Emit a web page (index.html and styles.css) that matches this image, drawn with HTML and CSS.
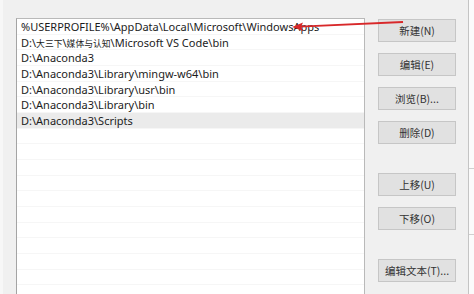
FILE: index.html
```html
<!DOCTYPE html>
<html lang="zh-CN">

<head>
    <meta charset="UTF-8">
    <meta name="viewport" content="width=device-width, initial-scale=1.0">
    <title>编辑环境变量</title>
    <link rel="stylesheet" href="styles.css">
</head>

<body>
    <div class="dialog">
        <div class="gutter"></div>

        <!-- Path list -->
        <ul class="path-list">
            <li>%USERPROFILE%\AppData\Local\Microsoft\WindowsApps</li>
            <li>D:\<span class="cjk">大三下</span>\<span class="cjk">媒体与认知</span>\Microsoft VS Code\bin</li>
            <li>D:\Anaconda3</li>
            <li>D:\Anaconda3\Library\mingw-w64\bin</li>
            <li>D:\Anaconda3\Library\usr\bin</li>
            <li>D:\Anaconda3\Library\bin</li>
            <li class="selected">D:\Anaconda3\Scripts</li>
            <li></li>
            <li></li>
            <li></li>
            <li></li>
            <li></li>
            <li></li>
            <li></li>
            <li></li>
            <li></li>
            <li></li>
            <li></li>
        </ul>

        <!-- Buttons -->
        <div class="buttons">
            <button>新建(N)</button>
            <button>编辑(E)</button>
            <button>浏览(B)...</button>
            <button>删除(D)</button>
            <button class="spaced">上移(U)</button>
            <button>下移(O)</button>
            <button class="spaced">编辑文本(T)...</button>
        </div>

        <div class="behind">
            <div class="behind-line first"></div>
            <div class="behind-line second"></div>
        </div>
    </div>

    <!-- Red arrow drawn over the screenshot -->
    <svg class="arrow" width="474" height="294" viewBox="0 0 474 294">
        <line x1="403" y1="22" x2="300" y2="26.6" stroke="#d8282a" stroke-width="1.8" />
        <path d="M292 27 L303 22.5 L301 27 L303.5 31 Z" fill="#d8282a" />
    </svg>
</body>

</html>
```

FILE: styles.css
```css
body {
    margin: 0;
    padding: 0;
    width: 474px;
    height: 294px;
    overflow: hidden;
    background-color: #f0f0f0;
    font-family: "Noto Sans", "Noto Sans CJK SC", sans-serif;
    color: #1c1c1c;
    position: relative;
}

.dialog {
    display: flex;
    height: 294px;
}

.gutter {
    width: 3px;
    margin-right: 13px;
    background-color: #f7f7f7;
}

.path-list {
    list-style: none;
    margin: 18px 0 0 0;
    padding: 0;
    width: 347px;
    background-color: #ffffff;
    border: 1px solid #b9b9b9;
    border-left-color: #a4a4a4;
    border-bottom: none;
    overflow: hidden;
}

.path-list li {
    height: 15.67px;
    line-height: 15.67px;
    padding-left: 4px;
    font-size: 11px;
    white-space: nowrap;
    box-shadow: inset 0 -1px 0 #f6f6f6;
}

.path-list li.selected {
    background-color: #ebebeb;
}

.path-list .cjk {
    font-family: "Noto Sans CJK SC", sans-serif;
    font-size: 8.8px;
}

.buttons {
    display: flex;
    flex-direction: column;
    gap: 11px;
    margin: 19px 0 0 13px;
    width: 78px;
}

.buttons button {
    height: 23px;
    padding: 0;
    font-family: "Noto Sans CJK SC", sans-serif;
    font-size: 10.5px;
    color: #333333;
    background-color: #e1e1e1;
    border: 1px solid #c6c6c6;
    border-radius: 0;
}

.buttons button.spaced {
    margin-top: 18px;
}

.behind {
    margin-left: 12px;
    flex: 1;
    border-left: 1px solid #c4c4c4;
    background-color: #fbfbfb;
    position: relative;
}

.behind-line {
    height: 1px;
    background-color: #d0d0d0;
    margin-top: 168px;
}

.behind-line.second {
    margin-top: 65px;
}

/* Arrow overlay */
.arrow {
    position: absolute;
    top: 0;
    left: 0;
    pointer-events: none;
}
```
